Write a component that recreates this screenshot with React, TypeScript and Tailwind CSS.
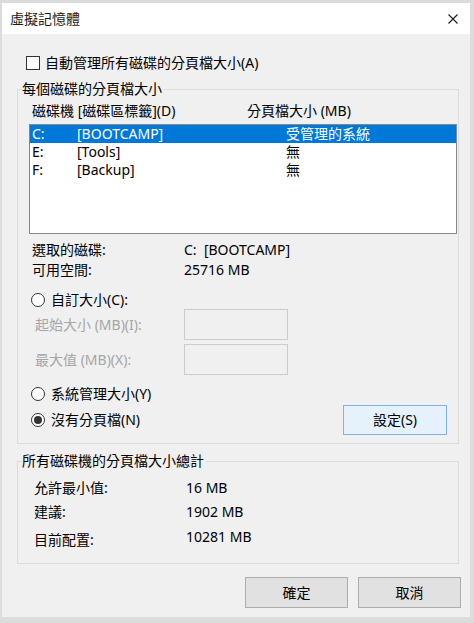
import React from "react";

// Radio button in the classic Win32 style
const Radio = ({ checked = false }: { checked?: boolean }) => (
  <span className="flex h-[14px] w-[14px] shrink-0 items-center justify-center rounded-full border border-[#333333] bg-white">
    {checked && <span className="h-[8px] w-[8px] rounded-full bg-[#333333]" />}
  </span>
);

const drives = [
  { letter: "C:", label: "[BOOTCAMP]", size: "受管理的系統", selected: true },
  { letter: "E:", label: "[Tools]", size: "無", selected: false },
  { letter: "F:", label: "[Backup]", size: "無", selected: false },
];

export default function App() {
  return (
    <div className="h-[623px] w-[474px] bg-[#dcdcdc] pl-[2px] pt-[3px] font-['Noto_Sans','Noto_Sans_CJK_TC',sans-serif] text-[14px] leading-[18px] text-black">
      <div className="flex h-[614px] w-[468px] flex-col bg-[#f0f0f0]">
        {/* Title bar */}
        <div className="flex h-[31px] items-center justify-between bg-white pl-[8px] pr-[12px]">
          <span className="text-[14px] text-[#1a1a1a]">虛擬記憶體</span>
          <svg width="10" height="10" viewBox="0 0 10 10" className="text-[#1a1a1a]">
            <path d="M0.5 0.5 L9.5 9.5 M9.5 0.5 L0.5 9.5" stroke="currentColor" strokeWidth="1.1" fill="none" />
          </svg>
        </div>

        {/* Auto manage checkbox */}
        <div className="ml-[24px] mt-[22px] flex h-[14px] items-center gap-[5px]">
          <span className="h-[14px] w-[14px] shrink-0 border border-[#333333] bg-white" />
          <span>自動管理所有磁碟的分頁檔大小(A)</span>
        </div>

        {/* Per-drive group */}
        <div className="relative ml-[15px] mt-[19px] flex h-[355px] w-[442px] flex-col border border-[#dcdcdc]">
          <span className="absolute left-[4px] top-[-10px] bg-[#f0f0f0] pr-[2px]">每個磁碟的分頁檔大小</span>

          <div className="mt-[12px] flex pl-[14px]">
            <span className="w-[215px]">磁碟機 [磁碟區標籤](D)</span>
            <span>分頁檔大小 (MB)</span>
          </div>

          <div className="ml-[11px] mt-[4px] h-[110px] w-[428px] border border-[#828790] bg-white">
            {drives.map((d) => (
              <div
                key={d.letter}
                className={
                  "flex h-[18px] items-center pl-[2px] " +
                  (d.selected ? "bg-[#0078d7] text-white" : "")
                }
              >
                <span className="w-[45px]">{d.letter}</span>
                <span className="w-[209px]">{d.label}</span>
                <span>{d.size}</span>
              </div>
            ))}
          </div>

          <div className="mt-[6px] flex flex-col pl-[14px] leading-[20px]">
            <div className="flex">
              <span className="w-[152px]">選取的磁碟:</span>
              <span>C:&nbsp; [BOOTCAMP]</span>
            </div>
            <div className="flex">
              <span className="w-[152px]">可用空間:</span>
              <span>25716 MB</span>
            </div>
          </div>

          <div className="mt-[11px] flex h-[18px] items-center gap-[6px] pl-[13px]">
            <Radio />
            <span>自訂大小(C):</span>
          </div>

          <div className="flex h-[31px] items-center pl-[17px]">
            <span className="w-[149px] text-[#a6a6a6]">起始大小 (MB)(I):</span>
            <span className="h-[31px] w-[104px] border border-[#cccccc] bg-[#f0f0f0]" />
          </div>
          <div className="mt-[4px] flex h-[31px] items-center pl-[17px]">
            <span className="w-[149px] text-[#a6a6a6]">最大值 (MB)(X):</span>
            <span className="h-[31px] w-[104px] border border-[#cccccc] bg-[#f0f0f0]" />
          </div>

          <div className="mt-[10px] flex h-[18px] items-center gap-[6px] pl-[13px]">
            <Radio />
            <span>系統管理大小(Y)</span>
          </div>

          <div className="mt-[2px] flex h-[30px] items-center justify-between pl-[13px] pr-[11px]">
            <div className="flex items-center gap-[6px]">
              <Radio checked />
              <span>沒有分頁檔(N)</span>
            </div>
            <button className="flex h-[30px] w-[104px] items-center justify-center border border-[#7eb4ea] bg-[#e5f1fb]">
              設定(S)
            </button>
          </div>
        </div>

        {/* Totals group */}
        <div className="relative ml-[15px] mt-[17px] flex h-[103px] w-[442px] flex-col border border-[#dcdcdc]">
          <span className="absolute left-[4px] top-[-10px] bg-[#f0f0f0] pr-[2px]">所有磁碟機的分頁檔大小總計</span>
          <div className="mt-[17px] flex pl-[16px]">
            <span className="w-[152px]">允許最小值:</span>
            <span>16 MB</span>
          </div>
          <div className="mt-[6px] flex pl-[16px]">
            <span className="w-[152px]">建議:</span>
            <span>1902 MB</span>
          </div>
          <div className="mt-[7px] flex items-start pl-[16px]">
            <span className="w-[152px] pt-[3px]">目前配置:</span>
            <span>10281 MB</span>
          </div>
        </div>

        {/* Dialog buttons */}
        <div className="mt-[13px] flex justify-end gap-[10px] pr-[9px]">
          <button className="flex h-[31px] w-[103px] items-center justify-center border border-[#adadad] bg-[#e1e1e1]">
            確定
          </button>
          <button className="flex h-[31px] w-[103px] items-center justify-center border border-[#adadad] bg-[#e1e1e1]">
            取消
          </button>
        </div>
      </div>
    </div>
  );
}
